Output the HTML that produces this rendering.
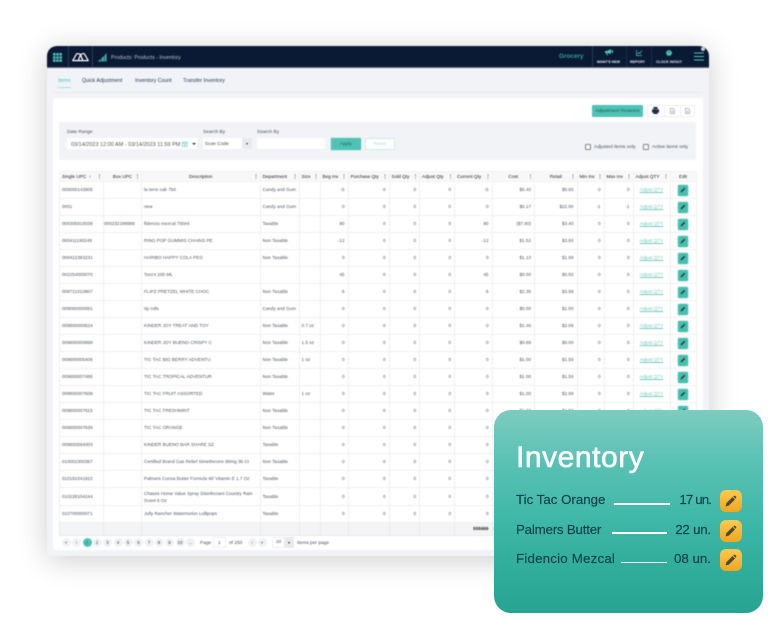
<!DOCTYPE html>
<html><head><meta charset="utf-8"><title>Inventory</title>
<style>
html,body{margin:0;padding:0;background:#fff}
body{width:768px;height:618px;overflow:hidden;position:relative;font-family:"Liberation Sans",sans-serif}
.a{position:absolute;white-space:nowrap}
#app{position:absolute;left:47px;top:46px;width:662px;height:510px;background:#f1f3f7;border-radius:10px 10px 4px 4px;box-shadow:0 4px 30px rgba(0,0,0,.2)}
#in{position:absolute;left:0;top:0;width:768px;height:618px;filter:blur(.45px)}
#hd{position:absolute;left:47px;top:46px;width:662px;height:22px;background:#0a1a35;border-radius:10px 10px 0 0;border-bottom:1px solid #5d6a80;box-sizing:border-box}
.dv{position:absolute;top:46px;width:1px;height:21px;background:#2c3a52}
.hl{position:absolute;top:59.5px;font-size:3.6px;font-weight:bold;color:#e6e9ee;transform:translateX(-50%);white-space:nowrap}
.tab{position:absolute;top:77.5px;font-size:5.2px;color:#2c3a4c;white-space:nowrap;line-height:6px}
#panel{position:absolute;left:53px;top:98px;width:650px;height:452px;background:#fff;border-radius:2px}
#flt{position:absolute;left:59px;top:122px;width:637px;height:38px;background:#f1f3f7}
.lb{position:absolute;font-size:4.8px;color:#4a4f57;white-space:nowrap;line-height:6px}
.box{position:absolute;background:#fff;border-radius:1px}
table{position:absolute;left:59px;top:171px;border-collapse:collapse;table-layout:fixed;width:636px;font-size:4.6px;color:#4c545e}
td,th{border:1px solid #efefef;padding:1px 2px 0;height:17px;box-sizing:border-box;overflow:hidden;line-height:6.5px;font-weight:normal}
th{height:10px;background:#f8f8f9;color:#222;font-size:4.7px;position:relative;border-color:#f3f3f3;white-space:nowrap}
th i{position:absolute;right:1px;top:1.5px;font-style:normal;font-size:5px;font-weight:bold;color:#333}
td.r{text-align:right;padding-right:3px}
td.l{color:#6fcabd;text-decoration:underline;text-align:center;padding:1px 0 0}
td.e{padding:0;text-align:center}
td.e span{display:block;width:10px;height:11px;margin:0 auto;background:#45bfae;border-radius:1.5px;box-shadow:0 0 0 1px #d8f0ec;position:relative}
td.e svg{position:absolute;left:2px;top:2.5px;width:6px;height:6px}
tr.f td{height:13px;background:#f3f4f5;color:#222;font-weight:bold;border-color:#e9e9e9}
.p{position:absolute;top:537.5px;width:9px;height:9px;border-radius:50%;background:#f0f1f3;font-size:4.5px;line-height:10px;text-align:center;color:#444}
#card{position:absolute;left:494px;top:410px;width:269px;height:203px;border-radius:17px;background:linear-gradient(180deg,#7dccbf 0%,#5ac2b4 25%,#42b9aa 50%,#2fac9a 80%,#27a492 100%);box-shadow:0 0 1px rgba(255,255,255,.6)}
.it{position:absolute;font-size:13.3px;color:#113f4c;white-space:nowrap;line-height:16px;-webkit-text-stroke:.15px #113f4c}
.ln{position:absolute;height:1.6px;background:#fff}
.yb{position:absolute;left:719.5px;width:22px;height:22px;border-radius:6px;background:linear-gradient(180deg,#ffc94e,#eea722)}
.yb svg{position:absolute;left:5px;top:5px;width:12px;height:12px}
</style></head><body>
<div id="in">
<div id="app"></div>
<div id="hd"></div>
<svg class="a" style="left:52.5px;top:52.5px" width="9" height="9" viewBox="0 0 9 9"><path fill="#4fc3b5" d="M0 0h2.500v2.500H0zM3.200 0h2.500v2.500H3.200zM6.400 0h2.500v2.500H6.400zM0 3.200h2.500v2.500H0zM3.200 3.200h2.500v2.500H3.200zM6.400 3.200h2.500v2.500H6.400zM0 6.400h2.500v2.500H0zM3.200 6.400h2.500v2.500H3.200zM6.400 6.400h2.500v2.500H6.400z"/></svg>
<div class="dv" style="left:68px"></div><div class="dv" style="left:92px"></div>
<svg class="a" style="left:72px;top:52px" width="17" height="10" viewBox="0 0 17 10"><path fill="none" stroke="#fff" stroke-width="1.200" stroke-linejoin="round" d="M.8 8.600 4.500 2Q5.500.9 8.500 2.600 11.500.9 12.500 2L16.200 8.600H.8ZM8.500 2.600 6.200 8.600M8.500 2.600 10.800 8.600"/></svg>
<svg class="a" style="left:98px;top:52px" width="9" height="10" viewBox="0 0 9 10"><path fill="#3fae9f" d="M0 9 3 7v2.500H0zM3.500 6 6 4v5.500H3.500zM6.500 3.500 8.500 1v8.500h-2z"/></svg>
<div class="a" style="left:111px;top:55px;font-size:5.200px;line-height:6px;color:#b9c0cb">Products: Products - Inventory</div>
<div class="a" style="left:559px;top:53px;font-size:6.400px;font-weight:bold;line-height:7px;color:#2f9f92">Grocery</div>
<div class="dv" style="left:592px"></div><div class="dv" style="left:626px;background:#1b2a44"></div><div class="dv" style="left:651px;background:#1b2a44"></div>
<svg class="a" style="left:605px;top:49px" width="8" height="7" viewBox="0 0 8 7"><path fill="#4fc3b5" d="M0 2h2L6 0v5L2 4 3 6.500H2L1 4H0zM6.500 1.500 8 1v3l-1.500-.5z"/></svg>
<div class="hl" style="left:608.500px">WHAT'S NEW</div>
<svg class="a" style="left:636px;top:50px" width="6" height="6" viewBox="0 0 6 6"><path fill="none" stroke="#4fc3b5" stroke-width=".7" d="M.4 0v5.600H6M1.500 4 3 2.500l1 1L5.800.5"/></svg>
<div class="hl" style="left:637.500px">REPORT</div>
<svg class="a" style="left:666px;top:49.500px" width="6" height="6" viewBox="0 0 6 6"><circle cx="3" cy="3" r="2.900" fill="#4fc3b5"/><path d="M3 1.300V3.200" stroke="#0a1a35" stroke-width=".6"/></svg>
<div class="hl" style="left:669px">CLOCK IN/OUT</div>
<svg class="a" style="left:693.500px;top:52px" width="10" height="10" viewBox="0 0 10 10"><path stroke="#4fc3b5" stroke-width="1.100" d="M0 1h10M0 4.500h10M0 8h10"/></svg>
<div class="a" style="left:701px;top:47px;width:4px;height:4px;border-radius:50%;background:#c5cad2"></div>

<div class="tab" style="left:58px;color:#4fc3b5">Items</div>
<div class="tab" style="left:82px">Quick Adjustment</div>
<div class="tab" style="left:135px">Inventory Count</div>
<div class="tab" style="left:183px">Transfer Inventory</div>
<div class="a" style="left:58px;top:86.500px;width:13px;height:1px;background:#a4e0d7"></div>
<div class="a" style="left:53px;top:92px;width:650px;height:1px;background:#e9ebef"></div>

<div id="panel"></div>
<div class="a" style="left:592px;top:105px;width:51px;height:12px;background:#4fc3b5;border-radius:1px;font-size:4.800px;line-height:14.500px;text-align:center;color:#1d5a55">Adjustment Reasons</div>
<div class="a" style="left:647px;top:105px;width:48px;height:12px;border:1px solid #eee;box-sizing:border-box;background:#fff"></div>
<div class="a" style="left:664px;top:105px;width:1px;height:12px;background:#eee"></div>
<div class="a" style="left:680px;top:105px;width:1px;height:12px;background:#eee"></div>
<svg class="a" style="left:652px;top:107px" width="7" height="7" viewBox="0 0 7 7"><path fill="#222c40" d="M1.500 0h4v2h-4zM0 2.300h7V5.500H5.700V7H1.300V5.500H0z"/></svg>
<svg class="a" style="left:670px;top:107.500px" width="5" height="6" viewBox="0 0 5 6"><path fill="none" stroke="#a9adb3" stroke-width=".7" d="M.4.400h2.800L4.600 1.800v3.800H.4zM1.300 3h2.400M1.300 4.300h2.400"/></svg>
<svg class="a" style="left:685px;top:107.500px" width="5" height="6" viewBox="0 0 5 6"><path fill="none" stroke="#a9adb3" stroke-width=".7" d="M.4.400h2.800L4.600 1.800v3.800H.4zM1.300 3h2.400M1.300 4.300h2.400"/></svg>

<div id="flt"></div>
<div class="lb" style="left:67px;top:129.500px">Date Range</div>
<div class="box" style="left:67px;top:138px;width:130px;height:11px"></div>
<div class="a" style="left:71px;top:141.500px;font-size:5.500px;line-height:6px;color:#555">03/14/2023 12:00 AM - 03/14/2023 11:59 PM</div>
<svg class="a" style="left:182px;top:140.500px" width="5.500" height="6" viewBox="0 0 6 6"><path fill="none" stroke="#4fc3b5" stroke-width=".6" d="M.3.800h5.400v4.900H.3zM.3 2.200h5.400M2 3.500h2M2 4.600h2"/></svg>
<div class="a" style="left:191.500px;top:142.500px;border:2px solid transparent;border-top:2.500px solid #333;border-bottom:0"></div>
<div class="lb" style="left:203px;top:129.500px">Search By</div>
<div class="box" style="left:203px;top:138px;width:49px;height:11px"></div>
<div class="a" style="left:242px;top:138px;width:10px;height:11px;background:#e9eaed"></div>
<div class="a" style="left:205px;top:141.500px;font-size:4.800px;line-height:6px;color:#444">Scan Code</div>
<div class="a" style="left:245.500px;top:143px;border:1.500px solid transparent;border-top:2px solid #333;border-bottom:0"></div>
<div class="lb" style="left:257px;top:129.500px">Search By</div>
<div class="box" style="left:257px;top:138px;width:68px;height:11px"></div>
<div class="a" style="left:331px;top:138px;width:30px;height:12px;background:#4fc3b5;border-radius:1px;font-size:4.800px;line-height:13.500px;text-align:center;color:#1f6660;box-shadow:0 0 0 .5px #b6e6de">Apply</div>
<div class="a" style="left:365px;top:138px;width:30px;height:12px;box-sizing:border-box;background:#fff;border:1px solid #c8ece6;border-radius:1px;font-size:4.800px;line-height:11.500px;text-align:center;color:#aadcd4">Reset</div>
<div class="a" style="left:585px;top:143.500px;width:6px;height:6px;box-sizing:border-box;border:.7px solid #888;border-radius:1px;background:#fafafa"></div>
<div class="lb" style="left:594px;top:144.500px">Adjusted items only</div>
<div class="a" style="left:643px;top:143.500px;width:6px;height:6px;box-sizing:border-box;border:.7px solid #888;border-radius:1px;background:#fafafa"></div>
<div class="lb" style="left:652px;top:144.500px">Active items only</div>

<svg width="0" height="0" style="position:absolute"><defs><symbol id="pn" viewBox="0 0 6 6"><path d="M.6 5.400 1 4 4.200.8l1 1L2 5z" fill="#1f3238"/></symbol></defs></svg>

<table>
<colgroup><col style="width:44px"><col style="width:38px"><col style="width:118.500px"><col style="width:39px"><col style="width:21px"><col style="width:28px"><col style="width:41px"><col style="width:30.500px"><col style="width:35px"><col style="width:37.500px"><col style="width:42.500px"><col style="width:42.500px"><col style="width:27px"><col style="width:29px"><col style="width:37px"><col style="width:26px"></colgroup>
<tr style="height:10px"><th style="text-align:left">Single UPC &nbsp;↑<i>⋮</i></th><th>Box UPC<i>⋮</i></th><th>Description<i>⋮</i></th><th style="text-align:left">Department<i>⋮</i></th><th style="text-align:left">Size<i>⋮</i></th><th style="text-align:left">Beg Inv<i>⋮</i></th><th style="text-align:left">Purchase Qty<i>⋮</i></th><th style="text-align:left">Sold Qty<i>⋮</i></th><th style="text-align:left">Adjust Qty<i>⋮</i></th><th style="text-align:left">Current Qty<i>⋮</i></th><th>Cost<i>⋮</i></th><th>Retail<i>⋮</i></th><th style="text-align:left">Min Inv<i>⋮</i></th><th style="text-align:left">Max Inv<i>⋮</i></th><th style="text-align:left">Adjust QTY<i>⋮</i></th><th>Edit</th></tr>
<tr><td>000000143905</td><td></td><td>la terre cab 750</td><td>Candy and Gum</td><td></td><td class="r">-5</td><td class="r">0</td><td class="r">0</td><td class="r">0</td><td class="r">-5</td><td class="r">$0.40</td><td class="r">$0.60</td><td class="r">0</td><td class="r">0</td><td class="l">Adjust QTY</td><td class="e"><span><svg><use href="#pn"/></svg></span></td></tr>
<tr><td>0001</td><td></td><td>new</td><td>Candy and Gum</td><td></td><td class="r">0</td><td class="r">0</td><td class="r">0</td><td class="r">0</td><td class="r">0</td><td class="r">$0.17</td><td class="r">$22.00</td><td class="r">-1</td><td class="r">-1</td><td class="l">Adjust QTY</td><td class="e"><span><svg><use href="#pn"/></svg></span></td></tr>
<tr><td>000305915038</td><td style="padding:1px 0 0;white-space:nowrap;overflow:visible">000232198988</td><td>fidencio mezcal 750ml</td><td>Taxable</td><td></td><td class="r">80</td><td class="r">0</td><td class="r">0</td><td class="r">0</td><td class="r">80</td><td class="r">($7.60)</td><td class="r">$3.40</td><td class="r">0</td><td class="r">0</td><td class="l">Adjust QTY</td><td class="e"><span><svg><use href="#pn"/></svg></span></td></tr>
<tr><td>000411190249</td><td></td><td>RING POP GUMMIS CHAINS PE</td><td>Non Taxable</td><td></td><td class="r">-12</td><td class="r">0</td><td class="r">0</td><td class="r">0</td><td class="r">-12</td><td class="r">$1.52</td><td class="r">$3.60</td><td class="r">0</td><td class="r">0</td><td class="l">Adjust QTY</td><td class="e"><span><svg><use href="#pn"/></svg></span></td></tr>
<tr><td>000422383231</td><td></td><td>HARIBO HAPPY COLA PEG</td><td>Non Taxable</td><td></td><td class="r">0</td><td class="r">0</td><td class="r">0</td><td class="r">0</td><td class="r">0</td><td class="r">$1.13</td><td class="r">$1.99</td><td class="r">0</td><td class="r">0</td><td class="l">Adjust QTY</td><td class="e"><span><svg><use href="#pn"/></svg></span></td></tr>
<tr><td>002254000070</td><td></td><td>Toro's 200 ML</td><td></td><td></td><td class="r">45</td><td class="r">0</td><td class="r">0</td><td class="r">0</td><td class="r">45</td><td class="r">$0.00</td><td class="r">$0.50</td><td class="r">0</td><td class="r">0</td><td class="l">Adjust QTY</td><td class="e"><span><svg><use href="#pn"/></svg></span></td></tr>
<tr><td>008721010807</td><td></td><td>FLIPZ PRETZEL WHITE CHOC</td><td>Non Taxable</td><td></td><td class="r">6</td><td class="r">0</td><td class="r">0</td><td class="r">0</td><td class="r">6</td><td class="r">$2.35</td><td class="r">$3.99</td><td class="r">0</td><td class="r">0</td><td class="l">Adjust QTY</td><td class="e"><span><svg><use href="#pn"/></svg></span></td></tr>
<tr><td>009060000081</td><td></td><td>rip rolls</td><td>Candy and Gum</td><td></td><td class="r">0</td><td class="r">0</td><td class="r">0</td><td class="r">0</td><td class="r">0</td><td class="r">$0.00</td><td class="r">$1.00</td><td class="r">0</td><td class="r">0</td><td class="l">Adjust QTY</td><td class="e"><span><svg><use href="#pn"/></svg></span></td></tr>
<tr><td>009800000524</td><td></td><td>KINDER JOY TREAT AND TOY</td><td>Non Taxable</td><td>0.7 oz</td><td class="r">0</td><td class="r">0</td><td class="r">0</td><td class="r">0</td><td class="r">0</td><td class="r">$1.46</td><td class="r">$2.09</td><td class="r">0</td><td class="r">0</td><td class="l">Adjust QTY</td><td class="e"><span><svg><use href="#pn"/></svg></span></td></tr>
<tr><td>009800000898</td><td></td><td>KINDER JOY BUENO CRISPY C</td><td>Non Taxable</td><td>1.5 oz</td><td class="r">0</td><td class="r">0</td><td class="r">0</td><td class="r">0</td><td class="r">0</td><td class="r">$0.88</td><td class="r">$0.00</td><td class="r">0</td><td class="r">0</td><td class="l">Adjust QTY</td><td class="e"><span><svg><use href="#pn"/></svg></span></td></tr>
<tr><td>009800005406</td><td></td><td>TIC TAC BIG BERRY ADVENTU</td><td>Non Taxable</td><td>1 oz</td><td class="r">0</td><td class="r">0</td><td class="r">0</td><td class="r">0</td><td class="r">0</td><td class="r">$1.00</td><td class="r">$1.59</td><td class="r">0</td><td class="r">0</td><td class="l">Adjust QTY</td><td class="e"><span><svg><use href="#pn"/></svg></span></td></tr>
<tr><td>009800007486</td><td></td><td>TIC TAC TROPICAL ADVENTUR</td><td>Non Taxable</td><td></td><td class="r">0</td><td class="r">0</td><td class="r">0</td><td class="r">0</td><td class="r">0</td><td class="r">$1.00</td><td class="r">$1.59</td><td class="r">0</td><td class="r">0</td><td class="l">Adjust QTY</td><td class="e"><span><svg><use href="#pn"/></svg></span></td></tr>
<tr><td>009800007608</td><td></td><td>TIC TAC FRUIT ASSORTED</td><td>Water</td><td>1 oz</td><td class="r">0</td><td class="r">0</td><td class="r">0</td><td class="r">0</td><td class="r">0</td><td class="r">$1.00</td><td class="r">$2.99</td><td class="r">0</td><td class="r">0</td><td class="l">Adjust QTY</td><td class="e"><span><svg><use href="#pn"/></svg></span></td></tr>
<tr><td>009800007615</td><td></td><td>TIC TAC FRESHMINT</td><td>Non Taxable</td><td></td><td class="r">0</td><td class="r">0</td><td class="r">0</td><td class="r">0</td><td class="r">0</td><td class="r">$1.00</td><td class="r">$1.59</td><td class="r">0</td><td class="r">0</td><td class="l">Adjust QTY</td><td class="e"><span><svg><use href="#pn"/></svg></span></td></tr>
<tr><td>009800007639</td><td></td><td>TIC TAC ORANGE</td><td>Non Taxable</td><td></td><td class="r">0</td><td class="r">0</td><td class="r">0</td><td class="r">0</td><td class="r">0</td><td class="r">$1.00</td><td class="r">$1.59</td><td class="r">0</td><td class="r">0</td><td class="l">Adjust QTY</td><td class="e"></td></tr>
<tr><td>009800594003</td><td></td><td>KINDER BUENO BAR SHARE SZ</td><td>Taxable</td><td></td><td class="r">0</td><td class="r">0</td><td class="r">0</td><td class="r">0</td><td class="r">0</td><td class="r">$1.00</td><td class="r">$1.59</td><td class="r">0</td><td class="r">0</td><td class="l">Adjust QTY</td><td class="e"></td></tr>
<tr><td>010002300367</td><td></td><td>Certified Brand Gas Relief Simethicone 80mg 36 Ct</td><td>Non Taxable</td><td></td><td class="r">0</td><td class="r">0</td><td class="r">0</td><td class="r">0</td><td class="r">0</td><td class="r">$1.00</td><td class="r">$1.59</td><td class="r">0</td><td class="r">0</td><td class="l">Adjust QTY</td><td class="e"></td></tr>
<tr><td>010181041822</td><td></td><td>Palmers Cocoa Butter Formula W/ Vitamin E 1.7 Oz</td><td>Taxable</td><td></td><td class="r">0</td><td class="r">0</td><td class="r">0</td><td class="r">0</td><td class="r">0</td><td class="r">$1.00</td><td class="r">$1.59</td><td class="r">0</td><td class="r">0</td><td class="l">Adjust QTY</td><td class="e"></td></tr>
<tr style="height:18px"><td>010228104244</td><td></td><td style="line-height:7px">Chases Home Value Spray Disinfectant Country Rain Scent 6 Oz</td><td>Taxable</td><td></td><td class="r">0</td><td class="r">0</td><td class="r">0</td><td class="r">0</td><td class="r">0</td><td class="r">$1.00</td><td class="r">$1.59</td><td class="r">0</td><td class="r">0</td><td class="l">Adjust QTY</td><td class="e"></td></tr>
<tr><td>010700000071</td><td></td><td>Jolly Rancher Watermelon Lollipops</td><td>Taxable</td><td></td><td class="r">0</td><td class="r">0</td><td class="r">0</td><td class="r">0</td><td class="r">0</td><td class="r">$1.00</td><td class="r">$1.59</td><td class="r">0</td><td class="r">0</td><td class="l">Adjust QTY</td><td class="e"></td></tr>
<tr class="f"><td></td><td></td><td></td><td></td><td></td><td></td><td></td><td></td><td></td><td class="r">555669</td><td style="padding-left:1px">1</td><td></td><td></td><td></td><td></td><td></td></tr>
</table>

<div class="p" style="left:61.500px">«</div><div class="p" style="left:72px">‹</div>
<div class="p" style="left:82.500px;background:#4fc3b5;color:#1f6660">1</div>
<div class="p" style="left:92.500px">2</div><div class="p" style="left:103px">3</div><div class="p" style="left:113.500px">4</div><div class="p" style="left:123.500px">5</div><div class="p" style="left:134px">6</div><div class="p" style="left:144.500px">7</div><div class="p" style="left:154.500px">8</div><div class="p" style="left:165px">9</div><div class="p" style="left:175.500px">10</div><div class="p" style="left:186px">...</div>
<div class="lb" style="left:200px;top:540.500px">Page</div>
<div class="box" style="left:213px;top:536.500px;width:13px;height:11px;border:.5px solid #eee;box-sizing:border-box;font-size:4.800px;line-height:11px;padding-left:4px;color:#555">1</div>
<div class="lb" style="left:229px;top:540.500px">of 250</div>
<div class="p" style="left:247.500px">›</div><div class="p" style="left:257.500px">»</div>
<div class="box" style="left:272px;top:536.500px;width:22px;height:11px;border:.5px solid #eee;box-sizing:border-box;font-size:4.800px;line-height:10px;padding-left:3px;color:#555">20</div>
<div class="a" style="left:284px;top:536.500px;width:10px;height:11px;background:#e9eaed"></div>
<div class="a" style="left:287.500px;top:541.500px;border:1.500px solid transparent;border-top:2px solid #333;border-bottom:0"></div>
<div class="lb" style="left:297px;top:540.500px">Items per page</div>
</div>

<div id="card"></div>
<div class="a" style="left:516px;top:441px;font-size:30px;line-height:34px;color:#fff;font-weight:normal;-webkit-text-stroke:.6px #fff;letter-spacing:.55px">Inventory</div>
<div class="it" style="left:516px;top:492px">Tic Tac Orange</div>
<div class="ln" style="left:614px;top:503px;width:56px"></div>
<div class="it" style="right:57px;top:492px;letter-spacing:-.9px">17 un.</div>
<div class="yb" style="top:489.500px"><svg viewBox="0 0 14 14"><use href="#pl"/></svg></div>
<div class="it" style="left:516px;top:521.500px;letter-spacing:-.2px">Palmers Butter</div>
<div class="ln" style="left:612px;top:532px;width:55px"></div>
<div class="it" style="right:57px;top:521.500px;letter-spacing:-.2px">22 un.</div>
<div class="yb" style="top:519.500px"><svg viewBox="0 0 14 14"><use href="#pl"/></svg></div>
<div class="it" style="left:516px;top:551px;letter-spacing:.2px">Fidencio Mezcal</div>
<div class="ln" style="left:621px;top:561.500px;width:46px"></div>
<div class="it" style="right:57px;top:551px">08 un.</div>
<div class="yb" style="top:549px"><svg viewBox="0 0 14 14"><use href="#pl"/></svg></div>
<svg width="0" height="0" style="position:absolute"><defs><symbol id="pl" viewBox="0 0 14 14"><path d="M1 13 1.800 9.600 8.800 2.600 11.400 5.200 4.400 12.200Z" fill="#4d4a3a" stroke="#4d4a3a" stroke-width=".5" stroke-linejoin="round"/><path d="M9.600 1.800 10.500 1Q11.200.5 11.900 1L13 2.100Q13.500 2.800 13 3.500L12.200 4.400Z" fill="#4d4a3a"/></symbol></defs></svg>
</body></html>
